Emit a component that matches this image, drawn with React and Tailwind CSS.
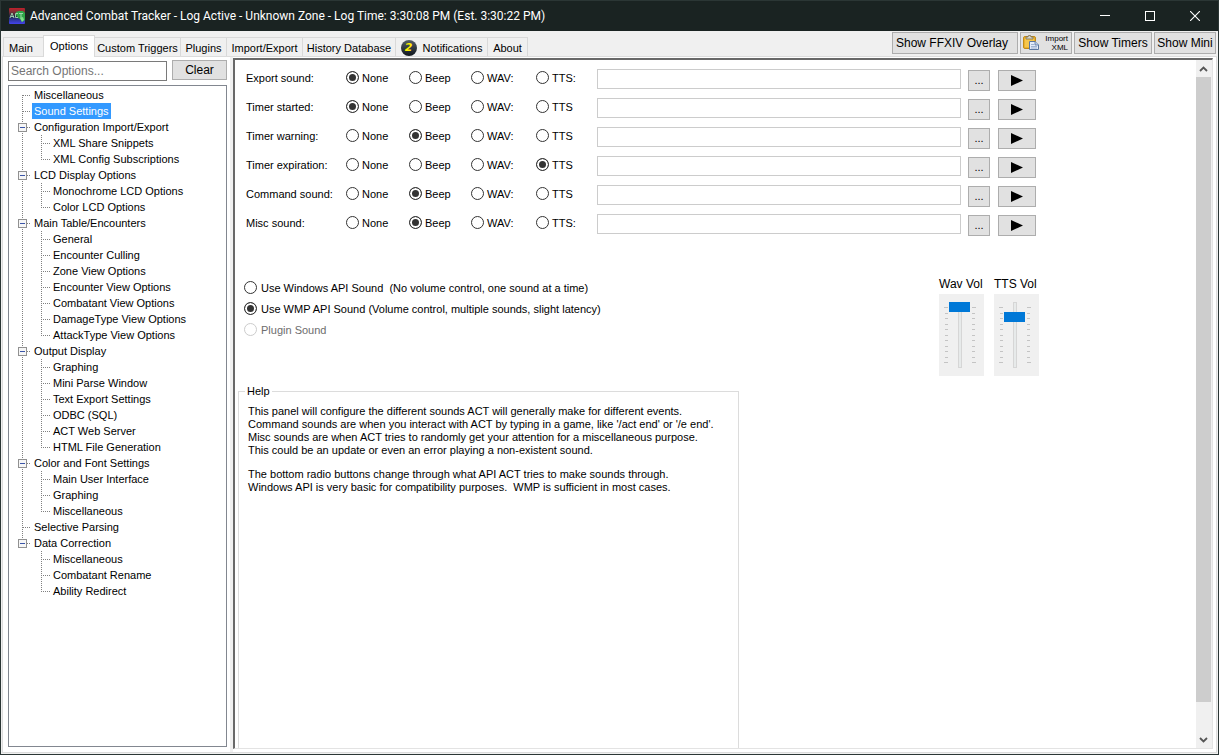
import React from "react";

const TABS = [
  { label: "Main", width: "w-[40px] pr-[5px]" },
  { label: "Options", width: "w-[52px]", active: true },
  { label: "Custom Triggers", width: "w-[86px]" },
  { label: "Plugins", width: "w-[46px]" },
  { label: "Import/Export", width: "w-[76px]" },
  { label: "History Database", width: "w-[93px]" },
  { label: "Notifications", width: "w-[92px]", badge: true },
  { label: "About", width: "w-[40px]" },
];

const TREE = [
  { label: "Miscellaneous" },
  { label: "Sound Settings", selected: true },
  { label: "Configuration Import/Export", items: ["XML Share Snippets", "XML Config Subscriptions"] },
  { label: "LCD Display Options", items: ["Monochrome LCD Options", "Color LCD Options"] },
  {
    label: "Main Table/Encounters",
    items: [
      "General",
      "Encounter Culling",
      "Zone View Options",
      "Encounter View Options",
      "Combatant View Options",
      "DamageType View Options",
      "AttackType View Options",
    ],
  },
  {
    label: "Output Display",
    items: [
      "Graphing",
      "Mini Parse Window",
      "Text Export Settings",
      "ODBC (SQL)",
      "ACT Web Server",
      "HTML File Generation",
    ],
  },
  { label: "Color and Font Settings", items: ["Main User Interface", "Graphing", "Miscellaneous"] },
  { label: "Selective Parsing" },
  { label: "Data Correction", items: ["Miscellaneous", "Combatant Rename", "Ability Redirect"] },
];

const SOUNDS = [
  { id: "export", label: "Export sound:", value: 0, tts: "TTS:" },
  { id: "started", label: "Timer started:", value: 0, tts: "TTS" },
  { id: "warning", label: "Timer warning:", value: 1, tts: "TTS" },
  { id: "expiration", label: "Timer expiration:", value: 3, tts: "TTS" },
  { id: "command", label: "Command sound:", value: 1, tts: "TTS" },
  { id: "misc", label: "Misc sound:", value: 1, tts: "TTS:" },
];

function AppIcon() {
  return (
    <svg width="16" height="16" viewBox="0 0 16 16" aria-hidden="true">
      <defs>
        <linearGradient id="sky" x1="0" y1="0" x2="0" y2="1">
          <stop offset="0" stopColor="#c0202a" />
          <stop offset="0.25" stopColor="#7a3038" />
          <stop offset="0.5" stopColor="#20243c" />
          <stop offset="0.75" stopColor="#3038a0" />
          <stop offset="1" stopColor="#4444f0" />
        </linearGradient>
      </defs>
      <rect width="16" height="16" rx="1" fill="url(#sky)" />
      <path d="M7 4l3-1h4l2 2v7l-3 2-2-3-2-1-2-3z" fill="#2fa548" />
      <path d="M11 10l3-1 1 3-2 2z" fill="#7fe08a" />
      <path
        d="M1 10l2-5 2 5M2 8.500h3M9 5.500H6.500V9.500H9M10 5.500h4M12 5.500V10"
        fill="none"
        stroke="#a8dcb8"
        strokeWidth="0.900"
      />
    </svg>
  );
}

function Badge() {
  return (
    <span className="grid size-4 shrink-0 place-items-center rounded-full bg-linear-to-b from-[#56606a] to-[#10161c] font-['DejaVu_Sans',sans-serif] text-[11px] leading-4 font-bold text-[#ffee00] italic">
      2
    </span>
  );
}

function PasteIcon() {
  return (
    <svg width="16" height="16" viewBox="0 0 16 16" aria-hidden="true">
      <rect x="0.500" y="1.500" width="12" height="12" rx="1.500" fill="#eeb22c" stroke="#c08a18" />
      <rect x="2" y="3" width="9" height="9" fill="#f5c64c" />
      <path d="M3 4V2h2l.5-1.500h2L8 2h2v2z" fill="#d8d4c4" stroke="#77705c" strokeWidth="0.800" />
      <path d="M6.500 6.500h5.500l3.500 3.500v4.500h-9z" fill="#e4ecf8" stroke="#5a769e" />
      <path d="M12 6.500V10h3.500" fill="#b9cce8" stroke="#5a769e" strokeWidth="0.800" />
      <path d="M8 9.500h3M8 11.500h6M8 13h6" stroke="#8fa6c8" strokeWidth="0.800" />
    </svg>
  );
}

function Guides({ child, box, up, down, trunk }) {
  const dots = { stroke: "#808080", strokeWidth: 1, strokeDasharray: "1 1" };
  return (
    <svg
      className={child ? "shrink-0 w-[42px]" : "shrink-0 w-[23px]"}
      height="16"
      shapeRendering="crispEdges"
      aria-hidden="true"
    >
      {child ? (
        <>
          {trunk && <line x1="13.500" x2="13.500" y1="0" y2="16" {...dots} />}
          <line x1="32.500" x2="32.500" y1="0" y2={down ? 16 : 9} {...dots} />
          <line x1="32" x2="41" y1="8.500" y2="8.500" {...dots} />
        </>
      ) : (
        <>
          <line x1="13.500" x2="13.500" y1={up ? 0 : 8} y2={down ? 16 : 9} {...dots} />
          <line x1="14" x2="22" y1="8.500" y2="8.500" {...dots} />
          {box && (
            <>
              <rect x="9.500" y="4.500" width="8" height="8" fill="#f6f6f6" stroke="#919191" />
              <line x1="11" x2="16" y1="8.500" y2="8.500" stroke="#3a55a8" />
            </>
          )}
        </>
      )}
    </svg>
  );
}

function TreeRow({ label, selected, ...guides }) {
  return (
    <div className="flex h-4 items-center">
      <Guides {...guides} />
      <button
        type="button"
        className={
          selected
            ? "h-4 bg-[#3399ff] px-[2px] leading-4 whitespace-nowrap text-white"
            : "h-4 px-[2px] leading-4 whitespace-nowrap"
        }
      >
        {label}
      </button>
    </div>
  );
}

function OptionTree() {
  return (
    <ul className="flex-1 overflow-hidden border border-[#828790] bg-white pt-px" aria-label="Options">
      {TREE.map((node, i) => {
        const last = i === TREE.length - 1;
        return (
          <li key={node.label}>
            <TreeRow
              label={node.label}
              selected={node.selected}
              box={Boolean(node.items)}
              up={i > 0}
              down={!last}
            />
            {node.items && (
              <ul>
                {node.items.map((item, j) => (
                  <li key={item}>
                    <TreeRow label={item} child trunk={!last} down={j < node.items.length - 1} />
                  </li>
                ))}
              </ul>
            )}
          </li>
        );
      })}
    </ul>
  );
}

function Radio({ name, label, checked, disabled, wide }) {
  return (
    <label
      className={
        (wide ? "gap-1 " : "gap-[3px] ") +
        (disabled ? "flex items-center whitespace-nowrap text-[#6d6d6d]" : "flex items-center whitespace-nowrap")
      }
    >
      <input
        type="radio"
        name={name}
        defaultChecked={checked}
        disabled={disabled}
        className="size-[13px] shrink-0 appearance-none rounded-full border border-[#333333] bg-white checked:bg-[#333333] checked:shadow-[inset_0_0_0_2px_white] disabled:border-[#cccccc]"
      />
      <span className="whitespace-pre">{label}</span>
    </label>
  );
}

const BUTTON = "border border-[#adadad] bg-[#e1e1e1]";

function SoundRow({ sound }) {
  const options = ["None", "Beep", "WAV:", sound.tts];
  return (
    <div
      role="radiogroup"
      aria-label={sound.label}
      className="grid h-[29px] grid-cols-[100px_63px_62px_65px_61px_minmax(120px,1fr)_22px_46px] items-start"
    >
      <span className="leading-[18px] whitespace-nowrap">{sound.label}</span>
      {options.map((option, i) => (
        <div key={option} className="flex h-[17px] items-center">
          <Radio name={sound.id} label={option} checked={i === sound.value} />
        </div>
      ))}
      <input
        type="text"
        aria-label={sound.label + " file or text"}
        className="mr-[7px] h-5 border border-[#cccccc] bg-white px-1 outline-none"
      />
      <button type="button" aria-label="Browse" className={BUTTON + " mt-px h-[21px] w-[22px] leading-[19px]"}>
        ...
      </button>
      <button
        type="button"
        aria-label="Play"
        className={BUTTON + " mt-px ml-2 flex h-[21px] w-[38px] items-center justify-center"}
      >
        <svg width="12" height="11" viewBox="0 0 12 11" aria-hidden="true">
          <path d="M0 0L12 5.500L0 11z" fill="#000" />
        </svg>
      </button>
    </div>
  );
}

function Volume({ id, label, value }) {
  const ticks = [13, 19, 24, 30, 35, 41, 46, 52, 57, 63, 68];
  return (
    <div className="flex w-[45px] flex-col">
      <label htmlFor={id} className="h-5 text-[12px] leading-5 whitespace-nowrap">
        {label}
      </label>
      <div className="relative flex h-[82px] justify-center bg-[#f0f0f0] pt-2">
        <svg
          className="absolute inset-0"
          width="45"
          height="82"
          shapeRendering="crispEdges"
          aria-hidden="true"
        >
          {ticks.map((y, i) => {
            const long = i === 0 || i === ticks.length - 1;
            return (
              <path
                key={y}
                d={`M${long ? 5 : 6} ${y + 0.5}H9M33 ${y + 0.5}H${long ? 37 : 36}`}
                stroke="#c4c4c4"
              />
            );
          })}
          <rect x="19.500" y="8.500" width="3" height="65" fill="#e7eaea" stroke="#d6d6d6" />
        </svg>
        <input
          id={id}
          type="range"
          min="0"
          max="100"
          defaultValue={value}
          className="relative mr-1 h-[66px] w-[21px] appearance-none bg-transparent [direction:rtl] [writing-mode:vertical-lr] [&::-webkit-slider-thumb]:h-[10px] [&::-webkit-slider-thumb]:w-[21px] [&::-webkit-slider-thumb]:appearance-none [&::-webkit-slider-thumb]:bg-[#0078d7]"
        />
      </div>
    </div>
  );
}

function TitleBar() {
  return (
    <header className="flex h-[30px] shrink-0 items-center bg-[#1a2322] pl-2 text-white">
      <AppIcon />
      <h1 className="ml-[5px] flex-1 font-[Roboto,sans-serif] text-[12px] leading-4 whitespace-nowrap">
        Advanced Combat Tracker - Log Active - Unknown Zone - Log Time: 3:30:08 PM (Est. 3:30:22 PM)
      </h1>
      <button type="button" aria-label="Minimize" className="flex h-full w-[45px] items-center justify-center">
        <svg width="10" height="10" viewBox="0 0 10 10" shapeRendering="crispEdges">
          <path d="M0 4.500h10" stroke="#fff" />
        </svg>
      </button>
      <button type="button" aria-label="Maximize" className="flex h-full w-[45px] items-center justify-center">
        <svg width="10" height="10" viewBox="0 0 10 10" shapeRendering="crispEdges">
          <rect x="0.500" y="0.500" width="9" height="9" fill="none" stroke="#fff" />
        </svg>
      </button>
      <button type="button" aria-label="Close" className="flex h-full w-[46px] items-center justify-center">
        <svg width="10" height="10" viewBox="0 0 10 10">
          <path d="M0 0l10 10M10 0L0 10" stroke="#fff" strokeWidth="1.100" />
        </svg>
      </button>
    </header>
  );
}

function TabStrip() {
  return (
    <div className="flex h-[25px] shrink-0 items-end justify-between">
      <div role="tablist" className="flex items-end pl-[2px]">
        {TABS.map((tab, i) => (
          <button
            key={tab.label}
            type="button"
            role="tab"
            aria-selected={Boolean(tab.active)}
            className={
              tab.width +
              (tab.active
                ? " relative -mb-px flex h-[22px] items-center justify-center border border-b-0 border-[#d9d9d9] bg-white pb-px whitespace-nowrap"
                : " flex h-[19px] items-center justify-center gap-[6px] border-t border-r border-[#d9d9d9] pt-px whitespace-nowrap") +
              (i === 0 ? " border-l border-r-0" : "")
            }
          >
            {tab.badge && <Badge />}
            {tab.label}
          </button>
        ))}
      </div>
      <div className="flex gap-[2px] self-start pt-px pr-[2px] text-[12px]">
        <button type="button" className={BUTTON + " h-[22px] w-[126px] pl-[3px] text-left whitespace-nowrap"}>
          Show FFXIV Overlay
        </button>
        <button
          type="button"
          className={BUTTON + " flex h-[22px] w-[52px] items-center justify-between pr-[3px] pl-[2px]"}
        >
          <PasteIcon />
          <span className="text-right text-[8px] leading-[9px]">
            Import
            <br />
            XML
          </span>
        </button>
        <button type="button" className={BUTTON + " h-[22px] w-[78px] whitespace-nowrap"}>
          Show Timers
        </button>
        <button type="button" className={BUTTON + " h-[22px] w-[62px] whitespace-nowrap"}>
          Show Mini
        </button>
      </div>
    </div>
  );
}

function ScrollBar() {
  return (
    <div className="flex w-4 shrink-0 flex-col bg-[#f0f0f0]" aria-hidden="true">
      <svg width="16" height="17" viewBox="0 0 16 17">
        <path d="M4 11l3.500-3.500L11 11" fill="none" stroke="#555" strokeWidth="1.800" />
      </svg>
      <div className="mr-px h-[625px] bg-[#cdcdcd]" />
      <div className="flex-1" />
      <svg width="16" height="17" viewBox="0 0 16 17">
        <path d="M4 7l3.500 3.500L11 7" fill="none" stroke="#555" strokeWidth="1.800" />
      </svg>
    </div>
  );
}

function SoundSettings() {
  return (
    <div className="flex min-w-0 flex-1 flex-col overflow-hidden bg-white pt-[9px] pl-[3px]">
      <div className="w-full max-w-[798px] pl-2">
        {SOUNDS.map((sound) => (
          <SoundRow key={sound.id} sound={sound} />
        ))}
      </div>
      <div className="mt-[31px] flex w-full max-w-[801px] justify-between pl-[6px]">
        <div className="mt-[7px] flex flex-col gap-2">
          <div className="flex h-[13px] items-center">
            <Radio name="api" label="Use Windows API Sound  (No volume control, one sound at a time)" wide />
          </div>
          <div className="flex h-[13px] items-center">
            <Radio
              name="api"
              label="Use WMP API Sound (Volume control, multiple sounds, slight latency)"
              checked
              wide
            />
          </div>
          <div className="flex h-[13px] items-center">
            <Radio name="api" label="Plugin Sound" disabled wide />
          </div>
        </div>
        <div className="flex gap-[10px]">
          <Volume id="wav-volume" label="Wav Vol" value="100" />
          <Volume id="tts-volume" label="TTS Vol" value="82" />
        </div>
      </div>
      <fieldset className="mt-[9px] w-full max-w-[501px] flex-1 border border-b-0 border-[#dcdcdc] px-[9px]">
        <legend className="-ml-[3px] px-[2px] leading-[13px]">Help</legend>
        <p className="mt-[7px] leading-[13px]">
          This panel will configure the different sounds ACT will generally make for different events.
          <br />
          Command sounds are when you interact with ACT by typing in a game, like '/act end' or '/e end'.
          <br />
          Misc sounds are when ACT tries to randomly get your attention for a miscellaneous purpose.
          <br />
          This could be an update or even an error playing a non-existent sound.
        </p>
        <p className="mt-[11px] leading-[13px] whitespace-pre-wrap">
          The bottom radio buttons change through what API ACT tries to make sounds through.
          <br />
          {"Windows API is very basic for compatibility purposes.  WMP is sufficient in most cases."}
        </p>
      </fieldset>
    </div>
  );
}

export default function App() {
  return (
    <div className="flex h-screen flex-col overflow-hidden border border-[#2b3635] bg-[#f0f0f0] font-['Liberation_Sans',Arial,sans-serif] text-[11px] leading-4 text-black">
      <TitleBar />
      <TabStrip />
      <main className="mr-px mb-px ml-px flex min-h-0 flex-1 border border-[#dcdcdc] bg-white">
        <aside className="flex w-[227px] shrink-0 flex-col pt-[3px] pr-[3px] pb-[5px] pl-[5px]">
          <div className="mb-1 flex items-start gap-[5px]">
            <input
              type="text"
              aria-label="Search options"
              placeholder="Search Options..."
              className="mt-px h-5 w-[159px] border border-[#7a7a7a] bg-white px-[2px] text-[12px] outline-none placeholder:text-[#757575]"
            />
            <button type="button" className={BUTTON + " h-5 flex-1 text-[12px] leading-[18px]"}>
              Clear
            </button>
          </div>
          <OptionTree />
        </aside>
        <div className="w-[3px] shrink-0 bg-[#f0f0f0]" />
        <section className="mt-px mr-[3px] mb-[3px] flex min-w-0 flex-1 border-t-2 border-r border-b border-l-2 border-t-[#696969] border-r-[#e3e3e3] border-b-[#e3e3e3] border-l-[#696969]">
          <SoundSettings />
          <ScrollBar />
        </section>
      </main>
    </div>
  );
}
